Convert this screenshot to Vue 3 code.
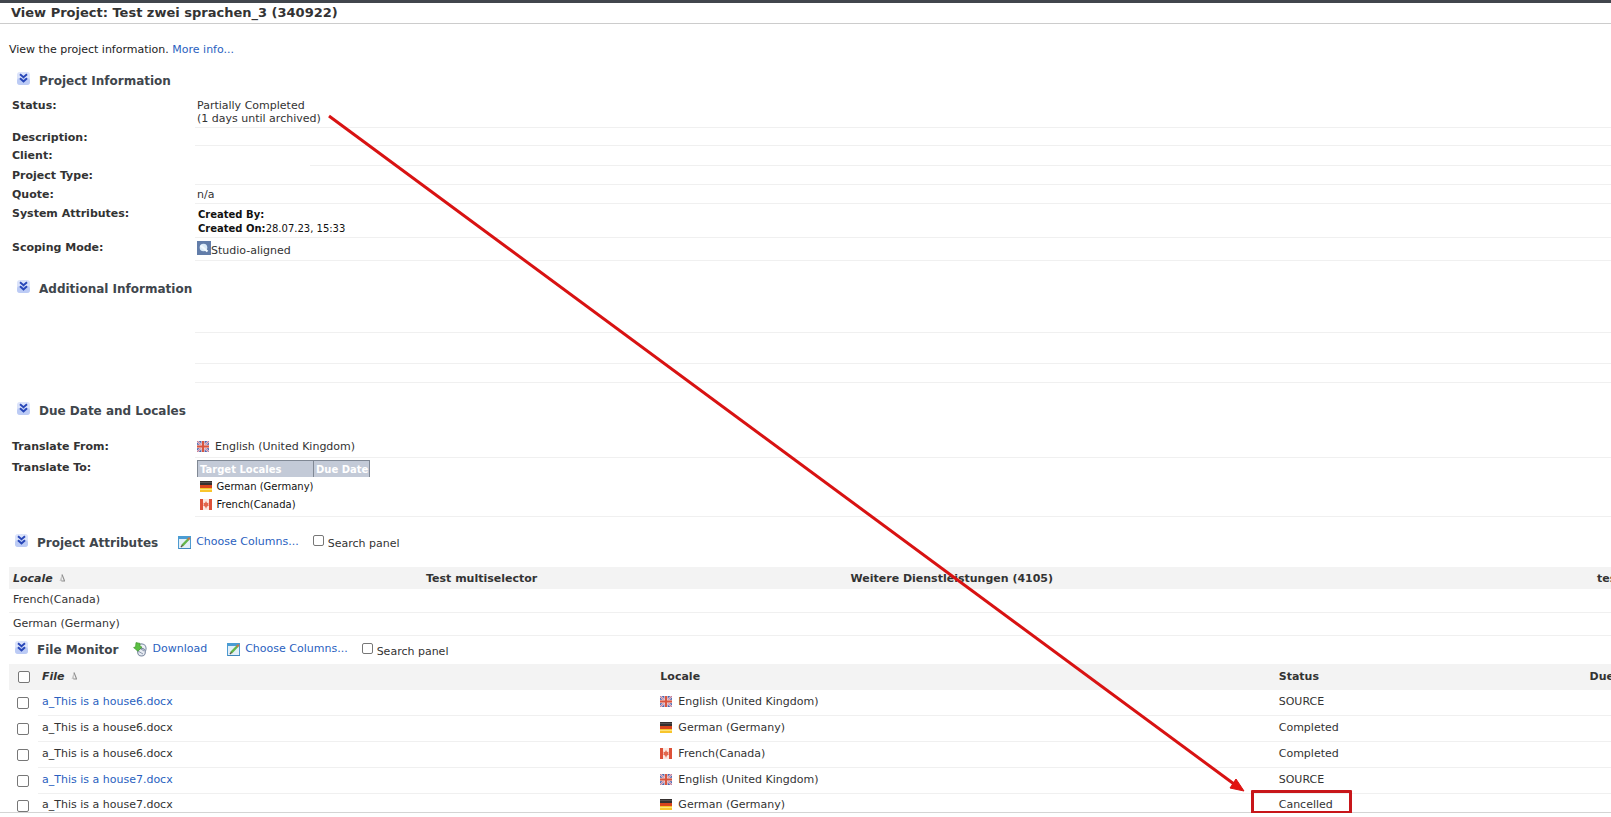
<script setup>
import { h } from 'vue'

const attributes = ['French(Canada)', 'German (Germany)']

const files = [
  { name: 'a_This is a house6.docx', link: true, flag: 'gb', locale: 'English (United Kingdom)', status: 'SOURCE' },
  { name: 'a_This is a house6.docx', link: false, flag: 'de', locale: 'German (Germany)', status: 'Completed' },
  { name: 'a_This is a house6.docx', link: false, flag: 'ca', locale: 'French(Canada)', status: 'Completed' },
  { name: 'a_This is a house7.docx', link: true, flag: 'gb', locale: 'English (United Kingdom)', status: 'SOURCE' },
  { name: 'a_This is a house7.docx', link: false, flag: 'de', locale: 'German (Germany)', status: 'Cancelled', marked: true },
]

const r = (x, y, width, height, fill) => h('rect', { x, y, width, height, fill })
const p = (d, stroke, w) => h('path', { d, stroke, 'stroke-width': w, fill: 'none' })

const svg = (w, hgt, kids) =>
  h('svg', { class: 'icon', width: w, height: hgt, viewBox: `0 0 ${w} ${hgt}`, 'aria-hidden': 'true' }, kids)

const flags = {
  gb: () => [
    r(0, 0, 12, 11, '#4a66b0'),
    p('M0 0L12 11M12 0L0 11', '#d9c9dc', 2.2),
    p('M0 0L12 11M12 0L0 11', '#d0687a', 0.8),
    p('M6 0V11M0 5.5H12', '#efd3d3', 3.4),
    p('M6 0V11M0 5.5H12', '#d9553f', 2),
  ],
  de: () => [
    r(0, 0, 12, 4, '#35302f'),
    r(0, 1, 12, 1, '#565150'),
    r(0, 4, 12, 3, '#d8441c'),
    r(0, 7, 12, 4, '#f8c52c'),
    r(0, 8, 12, 1, '#fde27a'),
  ],
  ca: () => [
    r(0, 0, 12, 11, '#fbe9e2'),
    r(0, 0, 3, 11, '#dd5138'),
    r(9, 0, 3, 11, '#dd5138'),
    h('path', { d: 'M6 2L7 4L8.6 3.8L8.2 5.6L9 6.2L6.5 8V9.3H5.5V8L3 6.2L3.8 5.6L3.4 3.8L5 4Z', fill: '#e2674c' }),
  ],
}
const Flag = (props) => svg(12, 11, flags[props.code]())
Flag.props = ['code']

const Chevron = () =>
  svg(13, 13, [
    h('rect', { x: 0, y: 0, width: 13, height: 13, rx: 3, fill: '#dbe3fa' }),
    h('rect', { x: 0, y: 6, width: 13, height: 7, rx: 3, fill: '#bccbf5' }),
    p('M3 2.2L6.5 5.2L10 2.2M3 6.2L6.5 9.4L10 6.2', '#2746b8', 1.9),
  ])

const Columns = () =>
  svg(13, 13, [
    h('rect', { x: 0.5, y: 0.5, width: 12, height: 12, fill: '#e3eff8', stroke: '#4f9bd0' }),
    r(0, 0, 13, 3, '#4a9cd3'),
    p('M1 12.5H13', '#3f86bd', 1),
    p('M4.2 9.6L10.6 3', '#63b54a', 2.4),
    p('M10 3.6L11.8 1.8', '#c07a4e', 2.2),
    p('M3 11L4.6 9.2', '#5a5a44', 1.4),
  ])

const Download = () =>
  svg(14, 15, [
    h('circle', { cx: 8.5, cy: 6.5, r: 4.6, fill: '#edf0f5', stroke: '#8190a8', 'stroke-width': 1.1 }),
    h('circle', { cx: 8.5, cy: 10.2, r: 3.8, fill: '#e6eaf1', stroke: '#7b889f', 'stroke-width': 1.1 }),
    p('M5 9L10 12M8 7L11 9', '#8d99ad', 1),
    h('path', { d: 'M3 0.6L7 1.4V4.4L9 5L5 9.2L0.6 5.6L2.6 4.8Z', fill: '#5cc043', stroke: '#41972f', 'stroke-width': 0.7 }),
  ])

const Scoping = () =>
  svg(14, 14, [
    r(0, 0, 14, 14, '#627da9'),
    h('circle', { cx: 6.5, cy: 6.5, r: 3.8, fill: '#dcecf8' }),
    p('M3.5 4.5L10.5 10.5', '#f4fafe', 2.2),
  ])

const SortMark = () =>
  svg(7, 8, [
    h('path', { d: 'M3 0L0.5 7H3Z', fill: '#c9c9c9' }),
    p('M3 0.5L5.6 7M2.4 7H6', '#8d8d8d', 1.1),
  ])
</script>

<template>
  <main class="page">
    <header class="title"><h1>View Project: Test zwei sprachen_3 (340922)</h1></header>
    <p class="intro">View the project information. <a href="#info">More info...</a></p>

    <section id="info">
      <h2 class="heading"><Chevron /><span>Project Information</span></h2>
      <dl class="info">
        <div class="row r32"><dt>Status:</dt><dd>Partially Completed<br>(1 days until archived)</dd></div>
        <div class="row r18"><dt>Description:</dt><dd></dd></div>
        <div class="row r20"><dt>Client:</dt><dd class="partial"></dd></div>
        <div class="row r19"><dt>Project Type:</dt><dd></dd></div>
        <div class="row r19"><dt>Quote:</dt><dd>n/a</dd></div>
        <div class="row r34">
          <dt>System Attributes:</dt>
          <dd class="system"><div><b>Created By:</b></div><div><b>Created On:</b><span>28.07.23, 15:33</span></div></dd>
        </div>
        <div class="row r23"><dt>Scoping Mode:</dt><dd class="scoping"><Scoping /><span>Studio-aligned</span></dd></div>
      </dl>
    </section>

    <section class="additional">
      <h2 class="heading"><Chevron /><span>Additional Information</span></h2>
      <div class="info">
        <div class="row r32"><div class="blank"></div></div>
        <div class="row r31"><div class="blank"></div></div>
        <div class="row r19"><div class="blank"></div></div>
      </div>
    </section>

    <section class="due">
      <h2 class="heading"><Chevron /><span>Due Date and Locales</span></h2>
      <dl class="info locales">
        <div class="row r21">
          <dt>Translate From:</dt>
          <dd><span class="locale"><Flag code="gb" />English (United Kingdom)</span></dd>
        </div>
        <div class="row r59">
          <dt>Translate To:</dt>
          <dd class="targets">
            <table>
              <thead><tr><th>Target Locales</th><th>Due Date</th></tr></thead>
              <tbody>
                <tr><td><span class="locale"><Flag code="de" />German (Germany)</span></td><td></td></tr>
                <tr><td><span class="locale"><Flag code="ca" />French(Canada)</span></td><td></td></tr>
              </tbody>
            </table>
          </dd>
        </div>
      </dl>
    </section>

    <section>
      <div class="toolbar tall">
        <h2><Chevron /><span>Project Attributes</span></h2>
        <a href="#columns" class="tool wide"><Columns /><span>Choose Columns...</span></a>
        <label class="search"><input type="checkbox"><span>Search panel</span></label>
      </div>
      <table class="grid attrs">
        <colgroup><col class="a1"><col class="a2"><col class="a3"><col></colgroup>
        <thead>
          <tr><th><i>Locale</i><SortMark /></th><th>Test multiselector</th><th>Weitere Dienstleistungen (4105)</th><th>tes</th></tr>
        </thead>
        <tbody>
          <tr v-for="name in attributes" :key="name"><td>{{ name }}</td><td></td><td></td><td></td></tr>
        </tbody>
      </table>
    </section>

    <section>
      <div class="toolbar">
        <h2><Chevron /><span>File Monitor</span></h2>
        <a href="#download" class="tool"><Download /><span>Download</span></a>
        <a href="#file-columns" class="tool wide"><Columns /><span>Choose Columns...</span></a>
        <label class="search"><input type="checkbox"><span>Search panel</span></label>
      </div>
      <table class="grid files">
        <colgroup><col class="f0"><col class="f1"><col class="f2"><col class="f3"><col></colgroup>
        <thead>
          <tr>
            <th><input type="checkbox" aria-label="Select all files"></th>
            <th><i>File</i><SortMark /></th><th>Locale</th><th>Status</th><th>Due</th>
          </tr>
        </thead>
        <tbody>
          <tr v-for="(file, i) in files" :key="i">
            <td><input type="checkbox" :aria-label="file.name"></td>
            <td><a v-if="file.link" href="#file">{{ file.name }}</a><template v-else>{{ file.name }}</template></td>
            <td><span class="locale"><Flag :code="file.flag" />{{ file.locale }}</span></td>
            <td><span class="status">{{ file.status }}<span v-if="file.marked" class="mark"></span></span></td>
            <td></td>
          </tr>
        </tbody>
      </table>
    </section>

    <svg class="arrow" aria-hidden="true">
      <path d="M329 116L1234 784" stroke="#d81212" stroke-width="3" fill="none" />
      <path d="M1244 791L1230 788L1236 779Z" fill="#e3120f" stroke="#d81212" />
    </svg>
  </main>
</template>

<style>
body { margin: 0; background: #fff; }
</style>

<style scoped>
.page {
  position: relative;
  border-bottom: 1px solid #d4d4d4;
  font-family: Verdana, "DejaVu Sans", sans-serif;
  font-size: 11px;
  line-height: 13px;
  color: #333;
}
a { color: #2a5fc0; text-decoration: none; }
h1, h2, p, dl, dd { margin: 0; }
.icon { display: block; flex: none; }
.title {
  border-top: 3px solid #41464d;
  border-bottom: 1px solid #ccc;
  padding-left: 11px;
}
h1 { font-size: 13px; line-height: 20px; color: #333; }
.intro { padding: 19px 9px 0; color: #222; }
.heading, .toolbar h2 {
  display: flex;
  font-size: 12px;
  line-height: 16px;
  color: #40464c;
}
.heading { padding: 16px 0 0 17px; gap: 9px; }
.heading span { padding-top: 1px; }
.info { padding: 7px 0 0 12px; }
.row { display: flex; }
.row dt { width: 183px; padding-top: 3px; font-weight: bold; }
.row dd, .blank {
  flex: 1;
  box-sizing: border-box;
  padding: 3px 0 0 2px;
  border-bottom: 1px solid #f0f0f0;
}
.blank { margin-left: 183px; }
.row .partial { margin-left: 115px; }
.r18 { height: 18px; }
.r19 { height: 19px; }
.r20 { height: 20px; }
.r21 { height: 21px; }
.r23 { height: 23px; }
.r31 { height: 31px; }
.r32 { height: 32px; }
.r34 { height: 34px; }
.r59 { height: 59px; }
.row .system { padding: 4px 0 0 3px; font-size: 10px; line-height: 14px; color: #111; }
.row .scoping { display: flex; }
.scoping span { padding-top: 3px; }
.additional .heading { padding-top: 19px; }
.additional .info { padding-top: 4px; }
.due .heading { padding-top: 19px; }
.due .info { padding-top: 18px; }
.locale { display: flex; align-items: center; gap: 6px; white-space: nowrap; }
.row .targets { padding-top: 2px; font-size: 10px; color: #111; }
.targets table { border-collapse: collapse; }
.targets th {
  padding: 1px 1px 0 2px;
  border: 1px solid #808894;
  border-width: 1px 1px 0;
  background: #c3cad7;
  color: #fff;
  line-height: 15px;
  text-align: left;
}
.targets td { height: 18px; padding: 0 0 0 2px; }
.targets .locale { gap: 5px; }
.toolbar { display: flex; height: 28px; padding-left: 15px; align-items: center; }
.toolbar.tall { height: 50px; }
.toolbar h2 { gap: 9px; }
.toolbar h2 span { padding-top: 1px; }
.tool { display: flex; align-items: center; gap: 5px; margin-left: 15px; }
.tool span { padding-bottom: 2px; }
.wide { margin-left: 20px; }
.search { display: flex; gap: 4px; margin-left: 14px; }
.search span { padding-top: 3px; }
input {
  appearance: none;
  display: block;
  box-sizing: border-box;
  width: 12px;
  height: 12px;
  margin: 0;
  border: 1px solid #777;
  border-radius: 2px;
  background: #fff;
}
.search input { width: 11px; height: 11px; margin-top: 1px; }
.grid { width: calc(100% - 9px); margin-left: 9px; table-layout: fixed; border-collapse: collapse; }
.grid th { height: 22px; padding: 0 0 0 4px; background: #f3f3f3; text-align: left; white-space: nowrap; }
.grid th .icon { display: inline-block; margin-left: 6px; }
.grid td {
  box-sizing: border-box;
  height: 23px;
  padding: 4px 0 0 4px;
  border-bottom: 1px solid #f0f0f0;
  vertical-align: top;
}
.a1 { width: 413px; }
.a2 { width: 26.5%; }
.a3 { width: 46.6%; }
.files th { height: 26px; }
.files td { height: 26px; padding-top: 5px; }
.files th:first-child { padding-left: 9px; }
.files td:first-child { padding: 7px 0 0 8px; border-bottom: 0; }
.files tr:last-child td { height: 18px; padding-top: 4px; border-bottom: 0; }
.files tr:last-child td:first-child { padding-top: 6px; }
.f0 { width: 29px; }
.f1 { width: 38.6%; }
.f2 { width: 38.6%; }
.f3 { width: 19.4%; }
.status { position: relative; }
.mark {
  position: absolute;
  top: -8px;
  left: -28px;
  box-sizing: border-box;
  width: 101px;
  height: 24px;
  border: 3px solid #c8161a;
  border-radius: 1px;
}
.arrow { position: absolute; top: 0; left: 0; width: 100%; height: 100%; pointer-events: none; }
</style>
